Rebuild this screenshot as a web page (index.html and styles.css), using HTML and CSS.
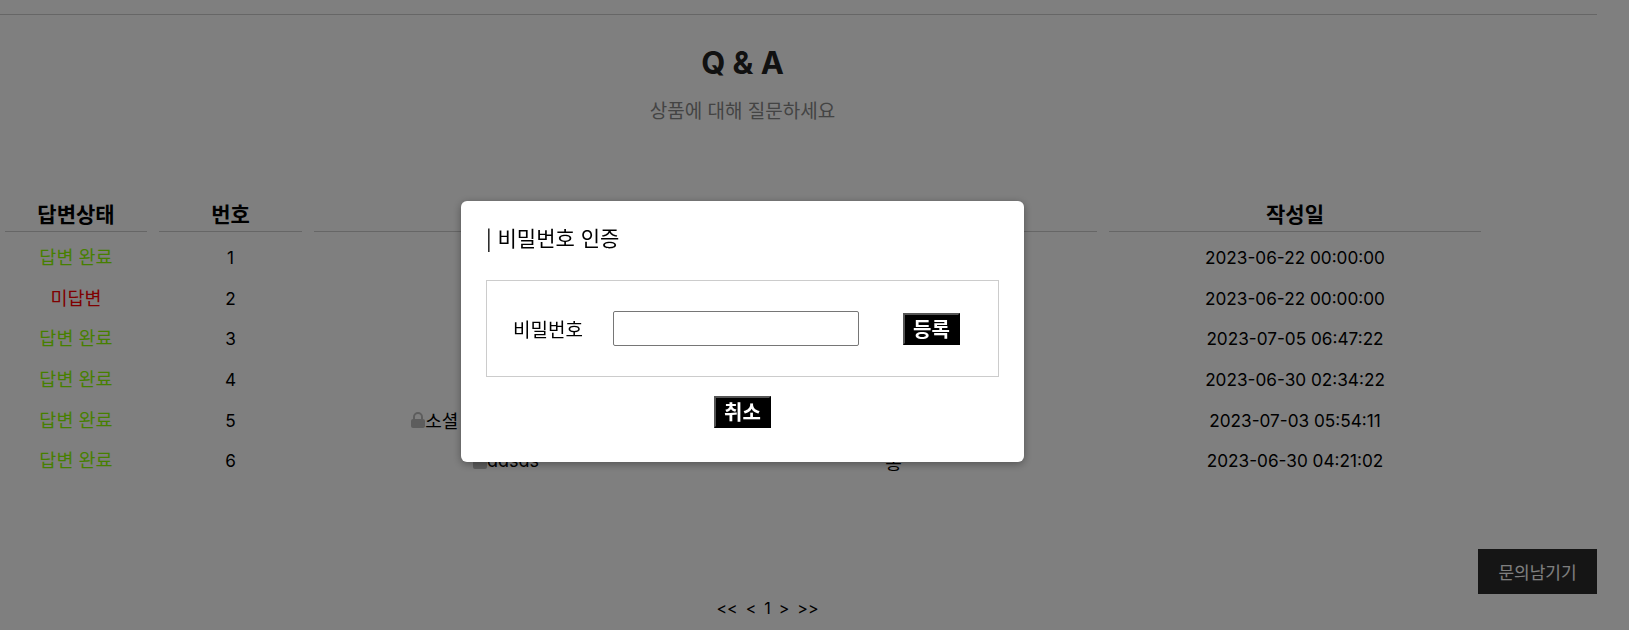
FILE: index.html
```html
<!DOCTYPE html>
<html lang="ko">
<head>
  <meta charset="UTF-8" />
  <title>Q &amp; A</title>
  <link rel="stylesheet" href="styles.css">
</head>
<body>

  <hr class="top-line">

  <div class="heading">
    <h2>Q &amp; A</h2>
    <p>상품에 대해 질문하세요</p>
  </div>

  <div class="board">
    <div class="th">답변상태</div>
    <div class="th">번호</div>
    <div class="th"></div>
    <div class="th"></div>
    <div class="th">작성일</div>

    <div class="td done">답변 완료</div>
    <div class="td">1</div>
    <div class="td"></div>
    <div class="td"></div>
    <div class="td">2023-06-22 00:00:00</div>

    <div class="td wait">미답변</div>
    <div class="td">2</div>
    <div class="td"></div>
    <div class="td"></div>
    <div class="td">2023-06-22 00:00:00</div>

    <div class="td done">답변 완료</div>
    <div class="td">3</div>
    <div class="td"></div>
    <div class="td"></div>
    <div class="td">2023-07-05 06:47:22</div>

    <div class="td done">답변 완료</div>
    <div class="td">4</div>
    <div class="td"></div>
    <div class="td"></div>
    <div class="td">2023-06-30 02:34:22</div>

    <div class="td done">답변 완료</div>
    <div class="td">5</div>
    <div class="td subject"><svg class="lock" viewBox="0 0 14 16"><path d="M3 7V5a4 4 0 0 1 8 0v2" fill="none" stroke="#bbb" stroke-width="2"/><rect y="7" width="14" height="9" rx="2" fill="#bbb"/></svg>소셜 로그인 문의합니다</div>
    <div class="td"></div>
    <div class="td">2023-07-03 05:54:11</div>

    <div class="td done">답변 완료</div>
    <div class="td">6</div>
    <div class="td subject"><svg class="lock" viewBox="0 0 14 16"><path d="M3 7V5a4 4 0 0 1 8 0v2" fill="none" stroke="#bbb" stroke-width="2"/><rect y="7" width="14" height="9" rx="2" fill="#bbb"/></svg>ddsds</div>
    <div class="td writer">홍</div>
    <div class="td">2023-06-30 04:21:02</div>
  </div>

  <div class="write-row">
    <button class="write-btn">문의남기기</button>
  </div>

  <div class="paging">
    <span>&lt;&lt;</span>
    <span>&lt;</span>
    <span>1</span>
    <span>&gt;</span>
    <span>&gt;&gt;</span>
  </div>

  <div class="overlay">
    <div class="modal">
      <h3>| 비밀번호 인증</h3>
      <div class="pw-box">
        <label>비밀번호</label>
        <input type="password">
        <button class="black-btn">등록</button>
      </div>
      <div class="modal-actions">
        <button class="black-btn">취소</button>
      </div>
    </div>
  </div>

</body>
</html>
```

FILE: styles.css
```css
body {
  margin: 0;
  height: 630px;
  overflow: hidden;
  background: #fff;
  color: #000;
  font-family: Inter, "Noto Sans CJK KR", sans-serif;
}

.top-line {
  width: 1597px;
  margin: 14px 0 0;
  border: none;
  border-top: 1px solid #ccc;
}

.heading {
  width: 1485px;
  margin-top: 30px;
  text-align: center;
}

.heading h2 {
  margin: 0;
  font-size: 31px;
  line-height: 36px;
  font-weight: 700;
  color: #222;
}

.heading p {
  margin: 16px 0 0;
  font-size: 19px;
  line-height: 26px;
  color: #888;
  font-family: "Noto Sans CJK KR", sans-serif;
}

.board {
  display: grid;
  grid-template-columns: 142px 143px 384px 387px 372px;
  grid-template-rows: 39.5px;
  grid-auto-rows: 40.6px;
  column-gap: 12px;
  margin-top: 75px;
  padding-left: 5px;
}

.th {
  height: 33px;
  border-bottom: 1px solid #ccc;
  text-align: center;
  font-size: 21px;
  line-height: 30px;
  font-weight: 700;
  font-family: "Noto Sans CJK KR", sans-serif;
}

.td {
  display: flex;
  align-items: center;
  justify-content: center;
  font-size: 17.2px;
}

.subject {
  font-size: 18px;
  font-family: Inter, "Noto Sans CJK KR", sans-serif;
}

.writer {
  padding-right: 20px;
  font-size: 18px;
  font-family: "Noto Sans CJK KR", sans-serif;
}

.done {
  padding-bottom: 3px;
  color: #8fff00;
  font-size: 18.5px;
  font-family: "Noto Sans CJK KR", sans-serif;
}

.wait {
  padding-bottom: 3px;
  color: #ff0000;
  font-size: 18.5px;
  font-family: "Noto Sans CJK KR", sans-serif;
}

.lock {
  width: 14px;
  height: 16px;
}

.write-row {
  display: flex;
  justify-content: flex-end;
  width: 1597px;
  margin-top: 67.5px;
}

.write-btn {
  width: 119px;
  height: 45px;
  border: none;
  background: #2b2b2b;
  color: #fff;
  font-size: 17px;
  font-weight: 400;
  font-family: "Noto Sans CJK KR", sans-serif;
}

.paging {
  display: flex;
  justify-content: center;
  gap: 8px;
  width: 1535px;
  margin-top: 4px;
  font-size: 16px;
}

.overlay {
  position: fixed;
  top: 0;
  left: 0;
  width: 100%;
  height: 100%;
  background: rgba(0, 0, 0, 0.5);
}

.modal {
  position: absolute;
  top: 201px;
  left: 461px;
  box-sizing: border-box;
  width: 563px;
  height: 261px;
  padding: 22px 25px;
  background: #fff;
  border-radius: 6px;
  box-shadow: 0 2px 8px rgba(0, 0, 0, 0.35);
}

.modal h3 {
  margin: 0;
  font-size: 21px;
  line-height: 28px;
  font-weight: 400;
  font-family: "Noto Sans CJK KR", sans-serif;
}

.pw-box {
  display: flex;
  align-items: center;
  box-sizing: border-box;
  width: 513px;
  height: 97px;
  margin-top: 29px;
  padding-left: 26px;
  border: 1px solid #ccc;
}

.pw-box label {
  width: 100px;
  font-size: 19px;
  font-family: "Noto Sans CJK KR", sans-serif;
}

.pw-box input {
  box-sizing: border-box;
  width: 246px;
  height: 35px;
  border: 1px solid #767676;
  border-radius: 2px;
  margin-right: 44px;
}

.black-btn {
  height: 32px;
  padding: 0 8px;
  background: #000;
  color: #fff;
  border: 2px outset #555;
  font-size: 20px;
  line-height: 24px;
  font-weight: 700;
  font-family: "Noto Sans CJK KR", sans-serif;
}

.modal-actions {
  display: flex;
  justify-content: center;
  margin-top: 19px;
}
```
